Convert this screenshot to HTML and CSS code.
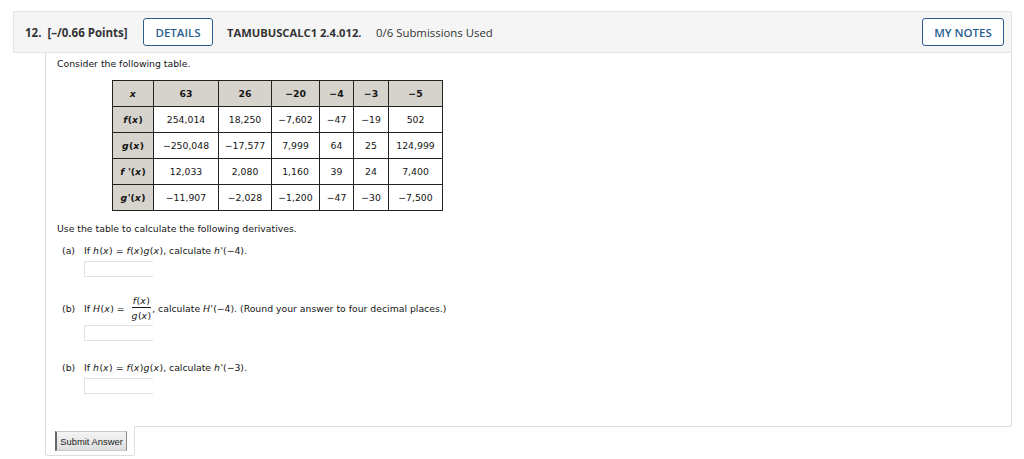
FILE: index.html
```html
<!DOCTYPE html>
<html>
<head>
<meta charset="utf-8">
<link rel="stylesheet" href="styles.css">
</head>
<body>
<div class="page">
  <div class="header">
    <span class="qnum">12.&nbsp; [–/0.66 Points]</span>
    <button class="btn details">DETAILS</button>
    <span class="qid">TAMUBUSCALC1 2.4.012.</span>
    <span class="subs">0/6 Submissions Used</span>
    <button class="btn notes">MY NOTES</button>
  </div>
  <div class="content">
    <p class="intro">Consider the following table.</p>
    <table class="data">
      <tr class="head"><th><i>x</i></th><th>63</th><th>26</th><th>−20</th><th>−4</th><th>−3</th><th>−5</th></tr>
      <tr><th><i>f</i>(<i>x</i>)</th><td>254,014</td><td>18,250</td><td>−7,602</td><td>−47</td><td>−19</td><td>502</td></tr>
      <tr><th><i>g</i>(<i>x</i>)</th><td>−250,048</td><td>−17,577</td><td>7,999</td><td>64</td><td>25</td><td>124,999</td></tr>
      <tr><th><i>f</i> '(<i>x</i>)</th><td>12,033</td><td>2,080</td><td>1,160</td><td>39</td><td>24</td><td>7,400</td></tr>
      <tr><th><i>g</i>'(<i>x</i>)</th><td>−11,907</td><td>−2,028</td><td>−1,200</td><td>−47</td><td>−30</td><td>−7,500</td></tr>
    </table>
    <p class="lead">Use the table to calculate the following derivatives.</p>
    <div class="part part-a">
      <span class="lbl">(a)</span>
      <div class="q">If <i>h</i>(<i>x</i>) = <i>f</i>(<i>x</i>)<i>g</i>(<i>x</i>), calculate <i>h</i>'(−4).</div>
      <div class="answer"></div>
    </div>
    <div class="part part-b">
      <span class="lbl">(b)</span>
      <div class="q">If <i>H</i>(<i>x</i>) = <span class="frac"><span class="num"><i>f</i>(<i>x</i>)</span><span class="den"><i>g</i>(<i>x</i>)</span></span>, calculate <i>H</i>'(−4). (Round your answer to four decimal places.)</div>
      <div class="answer"></div>
    </div>
    <div class="part part-c">
      <span class="lbl">(b)</span>
      <div class="q">If <i>h</i>(<i>x</i>) = <i>f</i>(<i>x</i>)<i>g</i>(<i>x</i>), calculate <i>h</i>'(−3).</div>
      <div class="answer"></div>
    </div>
  </div>
  <div class="submit-tab">
    <button class="submit">Submit Answer</button>
  </div>
</div>
</body>
</html>
```

FILE: styles.css
```css
html, body {
  margin: 0;
  padding: 0;
  background: #ffffff;
}
.page {
  padding: 11px 12px 0 13px;
}
.header {
  display: flex;
  align-items: center;
  height: 40px;
  background: #f5f5f5;
  border: 1px solid #e4e4e4;
  padding: 0 7px 0 11px;
  font-family: "Open Sans", sans-serif;
  font-size: 11.4px;
  color: #333333;
}
.qnum {
  font-weight: 700;
  font-size: 11.5px;
  width: 118px;
}
.btn {
  font-family: "Open Sans", sans-serif;
  font-weight: 600;
  font-size: 11.5px;
  color: #2a5d8e;
  background: #ffffff;
  border: 1.5px solid #2d5d8c;
  border-radius: 3px;
  height: 28px;
  padding: 0;
}
.details {
  width: 70px;
}
.qid {
  font-weight: 700;
  font-size: 11.2px;
  margin-left: 14px;
  width: 149px;
}
.subs {
  flex: 1;
}
.notes {
  width: 82px;
}
.content {
  margin-left: 32px;
  height: 373px;
  border-left: 1px solid #dedede;
  border-right: 1px solid #dedede;
  border-bottom: 1px solid #dedede;
  border-bottom-right-radius: 3px;
  padding: 0 0 0 11px;
  font-family: "DejaVu Sans", Verdana, sans-serif;
  font-size: 9.3px;
  color: #151515;
}
.content i {
  padding-right: 0.5px;
}
.intro {
  margin: 0;
  padding-top: 5px;
  line-height: 11px;
}
.data {
  margin: 11px 0 0 55px;
  border-collapse: collapse;
  font-size: 9.3px;
}
.data th, .data td {
  border: 1px solid #222222;
  height: 25px;
  padding: 0;
  text-align: center;
}
.data th {
  background: #d6d3cd;
  font-weight: 700;
}
.data th:nth-child(1) { width: 40px; }
.data th:nth-child(2) { width: 64px; }
.data th:nth-child(3) { width: 52px; }
.data th:nth-child(4) { width: 47px; }
.data th:nth-child(5) { width: 33px; }
.data th:nth-child(6) { width: 34px; }
.data th:nth-child(7) { width: 53px; }
.lead {
  margin: 12px 0 0 0;
  line-height: 11px;
}
.part {
  display: grid;
  grid-template-columns: 22px auto;
  margin-left: 5px;
}
.lbl {
  line-height: 11px;
}
.q {
  line-height: 11px;
}
.answer {
  grid-column: 2;
  width: 68px;
  height: 14px;
  margin-top: 5px;
  border: 1px solid #e2e2e2;
  border-right: none;
}
.part-a {
  margin-top: 11px;
}
.part-b {
  margin-top: 18px;
}
.part-b .lbl {
  align-self: center;
}
.part-b .q {
  display: flex;
  align-items: center;
  white-space: pre;
}
.part-b .answer {
  margin-top: 4px;
}
.frac {
  display: inline-flex;
  flex-direction: column;
  align-items: center;
  margin: 0 1px 0 4px;
}
.num {
  border-bottom: 1px solid #1a1a1a;
  padding: 0 1px 1px 1px;
  line-height: 11px;
}
.den {
  line-height: 11px;
  padding-top: 2px;
}
.part-c {
  margin-top: 21px;
}
.submit-tab {
  margin-left: 32px;
  margin-top: -1px;
  width: 90px;
  height: 30px;
  background: #ffffff;
  border: 1px solid #dedede;
  border-top: none;
  border-radius: 0 0 3px 3px;
  padding: 0 0 0 9px;
  box-sizing: border-box;
  position: relative;
}
.submit {
  margin-top: 5px;
  height: 20px;
  width: 72px;
  padding: 0;
  font-family: "Liberation Sans", Arial, sans-serif;
  font-size: 9.4px;
  color: #222222;
  background: linear-gradient(#f4f4f4, #dedede);
  border: 1px solid #c8c8c8;
  border-left: 2px solid #666666;
  border-right: 1px solid #888888;
  border-radius: 0;
}
```
